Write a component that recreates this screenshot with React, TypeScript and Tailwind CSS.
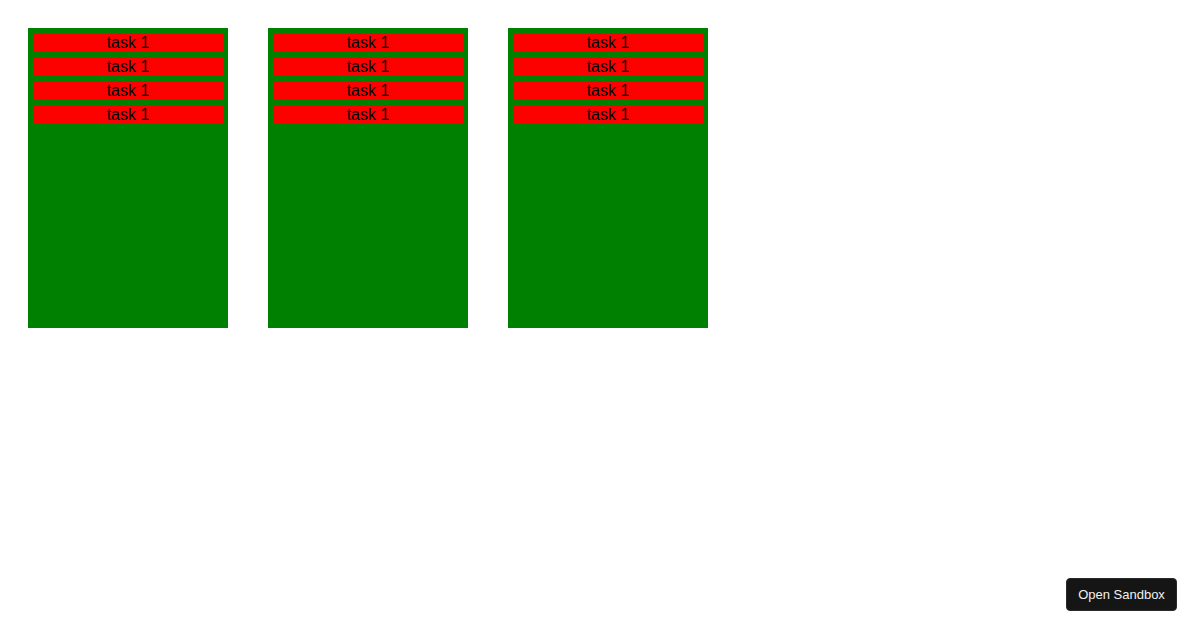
const columns = [0, 1, 2];
const tasks = ["task 1", "task 1", "task 1", "task 1"];

export default function App() {
  return (
    <div className="relative h-[630px] w-[1200px] bg-white font-['Liberation_Sans',Arial,sans-serif]">
      <div className="flex gap-[40px] p-[28px]">
        {columns.map((col) => (
          <div key={col} className="flex h-[300px] w-[200px] flex-col gap-[6px] bg-[#008000] p-[5px]">
            {tasks.map((t, i) => (
              <div key={i} className="h-[18px] bg-[#ff0000] text-center text-[16px] leading-[20px] text-black">
                {t}
              </div>
            ))}
          </div>
        ))}
      </div>

      {/* Sandbox button */}
      <button className="absolute bottom-[19px] right-[23px] h-[33px] w-[111px] rounded-[4px] border border-[#2a2a2a] bg-[#151515] text-[13px] text-[#f0f0f0] font-['Liberation_Sans',Arial,sans-serif]">
        Open Sandbox
      </button>
    </div>
  );
}
